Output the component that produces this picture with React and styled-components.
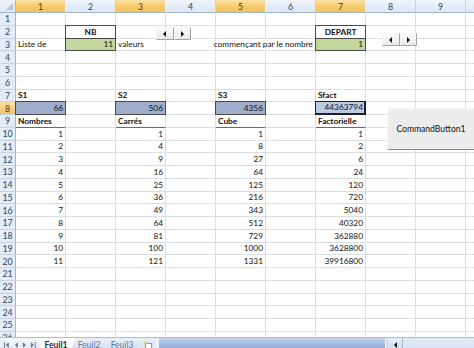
import React from 'react'
import styled, { createGlobalStyle, css } from 'styled-components'

const GlobalStyle = createGlobalStyle`
  html, body { margin: 0; padding: 0; overflow: hidden; background: #fff; }
  body { font-family: Lato, "Liberation Sans", sans-serif; }
`

const COLS = 10
const ROWS = 26
const SELECTED_COLS = [1, 3, 5, 7]
const SELECTED_ROWS = [8]

const fact = (n) => (n <= 1 ? 1 : n * fact(n - 1))

// contents of the sheet, keyed "row-col"
const cells = {
  '2-2': { text: 'NB', bold: true, align: 'center', box: 'plain' },
  '2-7': { text: 'DEPART', bold: true, align: 'center', box: 'plain' },
  '3-1': { text: 'Liste de' },
  '3-2': { text: '11', align: 'right', box: 'green' },
  '3-3': { text: 'valeurs' },
  '3-5': { text: 'commençant par le nombre', align: 'right', span: 2 },
  '3-7': { text: '1', align: 'right', box: 'green' },
  '7-1': { text: 'S1', bold: true },
  '7-3': { text: 'S2', bold: true },
  '7-5': { text: 'S3', bold: true },
  '7-7': { text: 'Sfact', bold: true },
  '8-1': { text: '66', align: 'right', box: 'blue' },
  '8-3': { text: '506', align: 'right', box: 'blue' },
  '8-5': { text: '4356', align: 'right', box: 'blue' },
  '8-7': { text: '44363794', align: 'right', box: 'active' },
  '9-1': { text: 'Nombres', bold: true, line: true },
  '9-3': { text: 'Carrés', bold: true, line: true },
  '9-5': { text: 'Cube', bold: true, line: true },
  '9-7': { text: 'Factorielle', bold: true, line: true },
}
for (let n = 1; n <= 11; n++) {
  const r = n + 9
  cells[`${r}-1`] = { text: String(n), align: 'right' }
  cells[`${r}-3`] = { text: String(n * n), align: 'right' }
  cells[`${r}-5`] = { text: String(n * n * n), align: 'right' }
  cells[`${r}-7`] = { text: String(fact(n)), align: 'right' }
}

const Page = styled.div`
  display: flex;
  flex-direction: column;
  width: 474px;
  height: 352px;
`

const SheetArea = styled.div`
  position: relative;
  height: 337px;
  overflow: hidden;
`

const Grid = styled.div`
  display: grid;
  grid-template-columns: 16px repeat(${COLS}, 50px);
  grid-template-rows: 13px repeat(${ROWS}, 12.75px);
  width: max-content;
  font-size: 8.3px;
  color: #111;
`

const Corner = styled.div`
  position: relative;
  background: linear-gradient(#eef3fa, #dfe8f3);
  border-right: 1px solid #9eb6ce;
  border-bottom: 1px solid #9eb6ce;
  box-sizing: border-box;
  &::after {
    content: '';
    position: absolute;
    right: 2px;
    bottom: 2px;
    border-left: 7px solid transparent;
    border-bottom: 7px solid #b7c7db;
  }
`

const headerColors = css`
  background: ${({ $sel }) =>
    $sel ? 'linear-gradient(#fbe1a8, #f5c865 60%, #f3c25c)' : 'linear-gradient(#f1f5fb, #dce6f3)'};
  color: ${({ $sel }) => ($sel ? '#4a3a1c' : '#2e4466')};
`

const ColHeader = styled.div`
  ${headerColors};
  display: flex;
  align-items: center;
  justify-content: center;
  box-sizing: border-box;
  border-right: 1px solid ${({ $sel }) => ($sel ? '#f2f2f2' : '#c5d3e4')};
  border-bottom: 1px solid #9eb6ce;
  font-size: 8.8px;
`

const RowHeader = styled.div`
  ${headerColors};
  background: ${({ $sel }) => ($sel ? 'linear-gradient(#fbe1a8, #f3c25c)' : '#e4ecf7')};
  display: flex;
  align-items: center;
  justify-content: center;
  box-sizing: border-box;
  border-right: 1px solid #9eb6ce;
  border-bottom: 1px solid #c5d3e4;
  font-size: 8.8px;
`

const boxes = {
  plain: css`background: #fff; --edge: #4a4a4a;`,
  green: css`background: #c3d69b; --edge: #4a4a4a;`,
  blue: css`background: #9eadc9; --edge: #4a4a4a;`,
  active: css`background: #bccbe3; --edge: #202020;`,
}

const Cell = styled.div`
  grid-column: ${({ $col }) => $col + 1} / span ${({ $span }) => $span || 1};
  grid-row: ${({ $row }) => $row + 1};
  display: flex;
  align-items: flex-end;
  justify-content: ${({ $align }) =>
    $align === 'right' ? 'flex-end' : $align === 'center' ? 'center' : 'flex-start'};
  box-sizing: border-box;
  padding: 0 2px 1px;
  line-height: 10px;
  white-space: nowrap;
  font-weight: ${({ $bold }) => ($bold ? 700 : 400)};
  border-right: 1px solid #dadfe6;
  border-bottom: 1px solid ${({ $line }) => ($line ? '#6b6b6b' : '#dadfe6')};
  ${({ $box }) =>
    $box &&
    css`
      ${boxes[$box]};
      position: relative;
      z-index: 1;
      border-right-color: var(--edge);
      border-bottom-color: var(--edge);
      box-shadow: -1px 0 0 var(--edge), 0 -1px 0 var(--edge), -1px -1px 0 var(--edge);
    `}
  ${({ $box }) =>
    $box === 'active' &&
    css`
      border-right-width: 2px;
      border-bottom-width: 2px;
      padding-right: 1px;
    `}
`

const Spin = styled.div`
  position: absolute;
  left: ${({ $x }) => $x}px;
  top: ${({ $y }) => $y}px;
  z-index: 2;
  display: flex;
  width: 35px;
  height: 13px;
`

const SpinHalf = styled.div`
  flex: 1;
  display: flex;
  align-items: center;
  justify-content: center;
  box-sizing: border-box;
  background: linear-gradient(#fbfbfb, #e9e9e9);
  border-top: 1px solid #f4f4f4;
  border-left: 1px solid #f4f4f4;
  border-right: 1px solid #a3a3a3;
  border-bottom: 1px solid #a3a3a3;
`

const Arrow = styled.span`
  width: 0;
  height: 0;
  border-top: 3px solid transparent;
  border-bottom: 3px solid transparent;
  ${({ $dir }) =>
    $dir === 'left' ? 'border-right: 3px solid #111;' : 'border-left: 3px solid #111;'}
`

const CommandButton = styled.button`
  position: absolute;
  left: 387px;
  top: 108px;
  z-index: 2;
  width: 88px;
  height: 42px;
  padding: 0;
  background: #ececec;
  border: 1px solid;
  border-color: #f8f8f8 #9a9a9a #8a8a8a #f8f8f8;
  font-family: Lato, "Liberation Sans", sans-serif;
  font-size: 8.6px;
  color: #111;
`

const TabBar = styled.div`
  display: flex;
  align-items: stretch;
  height: 15px;
  background: linear-gradient(#f3f7fc, #dfe8f4);
  border-top: 1px solid #a8bdd6;
  box-sizing: border-box;
`

const NavButtons = styled.div`
  display: flex;
  align-items: center;
  gap: 3px;
  width: 36px;
  padding-left: 4px;
  box-sizing: border-box;
`

const Tabs = styled.div`
  display: flex;
  align-items: stretch;
  padding-left: 4px;
`

const Tab = styled.div`
  display: flex;
  align-items: center;
  justify-content: center;
  width: 36px;
  margin-right: -3px;
  box-sizing: border-box;
  padding-right: 4px;
  font-size: 8.5px;
  clip-path: polygon(0 0, 100% 0, calc(100% - 7px) 100%, 0 100%);
  ${({ $active }) =>
    $active
      ? css`
          background: #fff;
          font-weight: 700;
          color: #1a2b4a;
          z-index: 1;
        `
      : css`
          background: linear-gradient(#e9f0f8, #cfdcee);
          color: #5a76a0;
        `}
`

const NewSheet = styled.div`
  display: flex;
  align-items: center;
  justify-content: center;
  width: 18px;
  background: linear-gradient(#e9f0f8, #cfdcee);
  clip-path: polygon(0 0, 100% 0, calc(100% - 6px) 100%, 0 100%);
`

const ScrollTrack = styled.div`
  width: 226px;
  margin-left: 2px;
  background: linear-gradient(#c3d6ee, #9bb8df 50%, #87a7d6);
`

const Splitter = styled.div`
  width: 3px;
  background: linear-gradient(90deg, #f4f4f4, #c4cfde);
`

const ScrollButton = styled.div`
  display: flex;
  align-items: center;
  justify-content: center;
  width: 14px;
  background: linear-gradient(#e7eef8, #c7d6ea);
  border-right: 1px solid #9eb6ce;
`

const ScrollRest = styled.div`
  flex: 1;
  background: linear-gradient(#e4ebf5, #d6e1ef);
`

const NavIcon = ({ dir, bar }) => (
  <svg width="6" height="6" viewBox="0 0 6 6">
    {dir === 'left' ? (
      <>
        {bar && <rect x="0" y="0" width="1" height="6" fill="#5d7799" />}
        <polygon points="5,0 5,6 2,3" fill="#5d7799" />
      </>
    ) : (
      <>
        <polygon points="1,0 1,6 4,3" fill="#5d7799" />
        {bar && <rect x="5" y="0" width="1" height="6" fill="#5d7799" />}
      </>
    )}
  </svg>
)

const SpinButton = ({ x, y }) => (
  <Spin $x={x} $y={y}>
    <SpinHalf><Arrow $dir="left" /></SpinHalf>
    <SpinHalf><Arrow $dir="right" /></SpinHalf>
  </Spin>
)

const Sheet = () => {
  const items = [<Corner key="corner" />]
  for (let c = 1; c <= COLS; c++) {
    items.push(
      <ColHeader key={`h${c}`} $sel={SELECTED_COLS.includes(c)}>{c}</ColHeader>
    )
  }
  for (let r = 1; r <= ROWS; r++) {
    items.push(
      <RowHeader key={`r${r}`} $sel={SELECTED_ROWS.includes(r)}>{r}</RowHeader>
    )
    for (let c = 1; c <= COLS; c++) {
      if (r === 3 && c === 6) continue
      const d = cells[`${r}-${c}`] || {}
      items.push(
        <Cell
          key={`${r}-${c}`}
          $row={r}
          $col={c}
          $span={d.span}
          $align={d.align}
          $bold={d.bold}
          $line={d.line}
          $box={d.box}
        >
          {d.text}
        </Cell>
      )
    }
  }
  return <Grid>{items}</Grid>
}

export default function App() {
  return (
    <Page>
      <GlobalStyle />
      <SheetArea>
        <Sheet />
        <SpinButton x={156} y={27} />
        <SpinButton x={382} y={33} />
        <CommandButton>CommandButton1</CommandButton>
      </SheetArea>
      <TabBar>
        <NavButtons>
          <NavIcon dir="left" bar />
          <NavIcon dir="left" />
          <NavIcon dir="right" />
          <NavIcon dir="right" bar />
        </NavButtons>
        <Tabs>
          <Tab $active>Feuil1</Tab>
          <Tab>Feuil2</Tab>
          <Tab>Feuil3</Tab>
          <NewSheet>
            <svg width="9" height="8" viewBox="0 0 9 8">
              <rect x="1.5" y="2.5" width="6" height="5" fill="#fff" stroke="#8a9bb5" />
              <circle cx="2" cy="2" r="1.6" fill="#e8b84a" />
            </svg>
          </NewSheet>
        </Tabs>
        <ScrollTrack />
        <Splitter />
        <ScrollButton>
          <Arrow $dir="left" />
        </ScrollButton>
        <ScrollRest />
      </TabBar>
    </Page>
  )
}
